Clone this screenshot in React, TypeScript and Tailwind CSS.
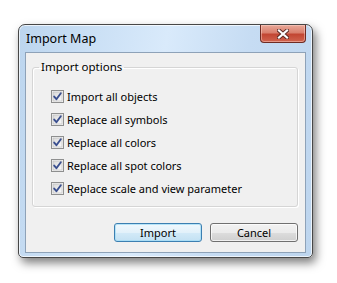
import React from 'react';

const font = { fontFamily: '"Noto Sans", "Open Sans", Arial, sans-serif' };

function CheckBox() {
  return (
    <svg width="13" height="13" viewBox="0 0 13 13" className="shrink-0">
      <defs>
        <linearGradient id="cbg" x1="0" y1="0" x2="1" y2="1">
          <stop offset="0" stopColor="#d8d8d8" />
          <stop offset="1" stopColor="#fbfbfb" />
        </linearGradient>
      </defs>
      <rect x="0.5" y="0.5" width="12" height="12" fill="#f4f4f4" stroke="#8e8f8f" />
      <rect x="2" y="2" width="9" height="9" fill="url(#cbg)" stroke="#b9b9b9" strokeWidth="0.6" />
      <path d="M3.2 6.6 L5.4 9.2 L9.8 3.2" fill="none" stroke="#3a4f8f" strokeWidth="1.9" strokeLinecap="round" strokeLinejoin="round" />
    </svg>
  );
}

const options = [
  'Import all objects',
  'Replace all symbols',
  'Replace all colors',
  'Replace all spot colors',
  'Replace scale and view parameter',
];

export default function App() {
  return (
    <div className="w-[337px] h-[283px] bg-white pt-[24px] pl-[18px]" style={font}>
      {/* window frame */}
      <div className="w-[295px] h-[234px] flex flex-col border border-[#474747] rounded-t-[7px] rounded-b-[5px] bg-[linear-gradient(100deg,#bcd5ee_0%,#cfe3f7_30%,#d9eafb_45%,#c6dcf3_70%,#bdd5ee_100%)] shadow-[inset_0_0_0_1px_rgba(255,255,255,0.7),3px_5px_10px_rgba(0,0,0,0.5)]">
        {/* title bar */}
        <div className="h-[27px] flex items-start justify-between pl-[7px] pr-[6px]">
          <span className="mt-[7px] text-[12.5px] leading-[14px] text-black">Import Map</span>
          <div className="w-[46px] h-[18px] flex items-center justify-center rounded-b-[4px] border border-t-0 border-[#6e2b23] bg-[linear-gradient(180deg,#e9a899_0%,#d9806e_45%,#c24633_55%,#d0644f_100%)] shadow-[inset_0_0_0_1px_rgba(255,220,210,0.45)]">
            <svg width="12" height="10" viewBox="0 0 12 10">
              <path d="M2 1.5 L10 8.5 M10 1.5 L2 8.5" stroke="#5a2a24" strokeWidth="4" strokeLinecap="square" />
              <path d="M2 1.5 L10 8.5 M10 1.5 L2 8.5" stroke="#ffffff" strokeWidth="2.2" strokeLinecap="square" />
            </svg>
          </div>
        </div>

        {/* client area */}
        <div className="mx-[6px] w-[281px] h-[201px] border border-[#8ea2b8] bg-[#f0f0f0] flex flex-col">
          <fieldset className="ml-[6px] mr-[7px] mt-[6px] border border-[#d5d5d5] rounded-[3px] shadow-[inset_1px_1px_0_#ffffff,1px_1px_0_#ffffff] pb-[6px]">
            <legend className="ml-[6px] px-[2px] text-[11.5px] leading-[16px] text-black">Import options</legend>
            <div className="flex flex-col pt-[10px] pl-[18px]">
              {options.map((o) => (
                <div key={o} className="h-[23px] flex items-center gap-[3px]">
                  <CheckBox />
                  <span className="text-[11px] leading-[14px] text-black">{o}</span>
                </div>
              ))}
            </div>
          </fieldset>

          <div className="mt-[16px] mr-[7px] flex justify-end gap-[8px]">
            <button className="w-[88px] h-[19px] rounded-[3px] border border-[#3c7fb1] bg-[linear-gradient(180deg,#f0f8fd_0%,#e2f1fa_50%,#d3eaf8_51%,#c3e1f3_100%)] shadow-[inset_0_0_0_1px_rgba(160,220,245,0.7)] text-[11px] leading-[14px] text-black">
              Import
            </button>
            <button className="w-[88px] h-[19px] rounded-[3px] border border-[#707070] bg-[linear-gradient(180deg,#f2f2f2_0%,#ebebeb_50%,#dddddd_51%,#cfcfcf_100%)] shadow-[inset_0_0_0_1px_rgba(255,255,255,0.7)] text-[11px] leading-[14px] text-black">
              Cancel
            </button>
          </div>
        </div>
      </div>
    </div>
  );
}
